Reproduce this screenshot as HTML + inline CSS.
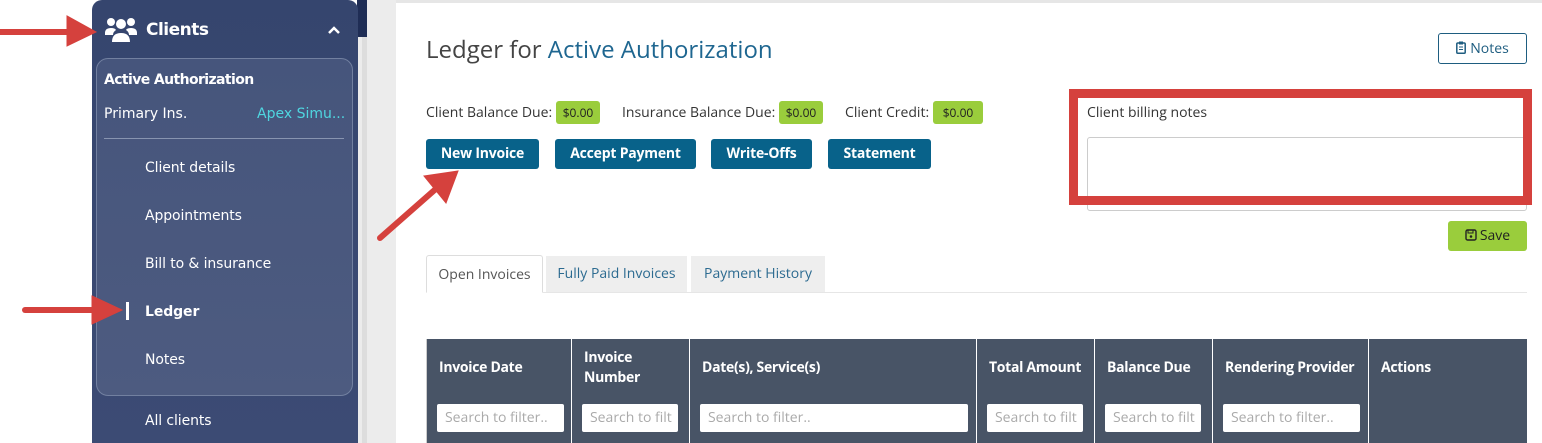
<!DOCTYPE html>
<html><head><meta charset="utf-8"><style>
*{box-sizing:border-box;margin:0;padding:0}
body{width:1542px;height:443px;overflow:hidden;background:#fff;position:relative;font-family:"Open Sans","Liberation Sans",sans-serif;}
.abs{position:absolute}
.sb{left:92px;top:0;width:266px;height:443px;background:linear-gradient(#35456e,#3c4b74);border-radius:10px 10px 0 0}
.sbt{font-family:"DejaVu Sans","Liberation Sans",sans-serif;color:#fff}
.box{left:96px;top:58px;width:257px;height:338px;border:1px solid #7280a0;border-radius:12px;background:linear-gradient(#46557c,#4d5b80)}
.nav{left:145px;font-size:14px;color:#fff;font-family:"DejaVu Sans","Liberation Sans",sans-serif;letter-spacing:-0.1px}
.btn{top:139px;height:30px;background:#08628a;color:#fff;font-weight:bold;font-size:14px;border-radius:3px;text-align:center;line-height:30px;letter-spacing:-0.2px}
.pill{top:101px;height:23px;background:#9acd3c;border-radius:3px;font-size:12px;color:#222;line-height:23px;text-align:center}
.lbl{top:103px;font-size:14px;color:#333}
.th{top:339px;height:104px;background:#485466;border-left:1px solid #fff}
.th span{position:absolute;left:12px;color:#fff;font-weight:bold;font-size:14px;line-height:20px;letter-spacing:-0.3px}
.th i{position:absolute;left:10px;top:65px;height:28px;background:#fff;font-style:normal;color:#aaa;font-size:14px;line-height:28px;padding-left:8px;overflow:hidden;white-space:nowrap;border-radius:2px}
</style></head><body>
<div class="abs" style="left:358px;top:0;width:38px;height:443px;background:#ececec"></div>
<div class="abs" style="left:357px;top:0;width:10px;height:37px;background:#1f2d55"></div>
<div class="abs" style="left:362px;top:37px;width:5px;height:406px;background:#ddd"></div>
<div class="abs" style="left:396px;top:0;width:1146px;height:443px;background:#fff;border-top:3px solid #e6e6e6"></div>

<div class="abs sb"></div>
<svg class="abs" style="left:105px;top:17px" width="32" height="26" viewBox="0 0 32 26" fill="#fff"><circle cx="6" cy="5" r="4"/><circle cx="26" cy="5" r="4"/><circle cx="16" cy="7" r="5"/><path d="M0 16q0-5 6-5q4 0 5 2q-3 2-3 5H0z"/><path d="M32 16q0-5-6-5q-4 0-5 2q3 2 3 5h8z"/><path d="M7 25q0-9 9-9q9 0 9 9z"/></svg>
<div class="abs sbt" style="left:146px;top:20px;font-size:17px;font-weight:bold;letter-spacing:-0.5px">Clients</div>
<svg class="abs" style="left:327px;top:25px" width="14" height="10"><path d="M2 8L7 3L12 8" stroke="#fff" stroke-width="2.5" fill="none"/></svg>
<div class="abs box"></div>
<div class="abs sbt" style="left:104px;top:72px;font-size:14px;font-weight:bold;letter-spacing:-0.6px">Active Authorization</div>
<div class="abs sbt" style="left:104px;top:106px;font-size:14px">Primary Ins.</div>
<div class="abs sbt" style="left:257px;top:106px;font-size:14px;color:#4fd6e0">Apex Simu...</div>
<div class="abs" style="left:104px;top:138px;width:240px;height:1px;background:#8894b0"></div>
<div class="abs nav" style="top:160px">Client details</div>
<div class="abs nav" style="top:208px">Appointments</div>
<div class="abs nav" style="top:256px">Bill to &amp; insurance</div>
<div class="abs" style="left:126px;top:302px;width:3px;height:18px;background:#fff"></div>
<div class="abs nav" style="top:304px;font-weight:bold">Ledger</div>
<div class="abs nav" style="top:352px">Notes</div>
<div class="abs nav" style="top:413px">All clients</div>

<div class="abs" style="left:426px;top:33px;font-size:24px;color:#444">Ledger for <span style="color:#1e6690">Active Authorization</span></div>
<div class="abs" style="left:1438px;top:33px;width:89px;height:31px;border:1px solid #1e5d80;border-radius:3px;color:#1e5d80;font-size:14px;line-height:29px;text-align:center">
<svg width="10" height="13" style="vertical-align:-1px;margin-right:4px" viewBox="0 0 10 13"><rect x="0.8" y="2" width="8.4" height="10.2" rx="1" fill="none" stroke="#1e5d80" stroke-width="1.5"/><rect x="3" y="0.5" width="4" height="3" fill="#1e5d80"/><path d="M3 6h4M3 8.5h4" stroke="#1e5d80"/></svg>Notes</div>

<div class="abs lbl" style="left:426px">Client Balance Due:</div>
<div class="abs pill" style="left:556px;width:44px">$0.00</div>
<div class="abs lbl" style="left:622px">Insurance Balance Due:</div>
<div class="abs pill" style="left:779px;width:44px">$0.00</div>
<div class="abs lbl" style="left:845px">Client Credit:</div>
<div class="abs pill" style="left:933px;width:50px">$0.00</div>

<div class="abs btn" style="left:426px;width:113px">New Invoice</div>
<div class="abs btn" style="left:555px;width:141px">Accept Payment</div>
<div class="abs btn" style="left:711px;width:101px">Write-Offs</div>
<div class="abs btn" style="left:828px;width:103px">Statement</div>

<div class="abs" style="left:1087px;top:103px;font-size:14px;color:#333">Client billing notes</div>
<div class="abs" style="left:1087px;top:137px;width:440px;height:74px;border:1px solid #ccc;border-radius:3px"></div>
<div class="abs" style="left:1069px;top:89px;width:463px;height:116px;border:9px solid #d5413d"></div>
<div class="abs" style="left:1448px;top:221px;width:79px;height:30px;background:#9acd3c;border-radius:3px;font-size:14px;color:#222;line-height:30px;text-align:center">
<svg width="12" height="12" viewBox="0 0 12 12" style="vertical-align:-1px;margin-right:3px"><rect x="1" y="1" width="10" height="10" rx="1.5" fill="none" stroke="#222" stroke-width="1.4"/><rect x="3" y="1" width="5" height="3" fill="none" stroke="#222"/><circle cx="6" cy="7.5" r="1.3" fill="#222"/></svg>Save</div>

<div class="abs" style="left:426px;top:292px;width:1101px;height:1px;background:#e6e6e6"></div>
<div class="abs" style="left:426px;top:255px;width:117px;height:38px;border:1px solid #ddd;border-bottom:1px solid #fff;border-radius:3px 3px 0 0;background:#fff;font-size:14px;color:#555;line-height:38px;text-align:center">Open Invoices</div>
<div class="abs" style="left:546px;top:256px;width:141px;height:36px;background:#eee;font-size:14px;color:#2b6a90;line-height:36px;text-align:center">Fully Paid Invoices</div>
<div class="abs" style="left:691px;top:256px;width:134px;height:36px;background:#eee;font-size:14px;color:#2b6a90;line-height:36px;text-align:center">Payment History</div>

<div class="abs" style="left:426px;top:339px;width:1101px;height:1px;background:#ccc"></div>
<div class="abs th" style="left:426px;width:145px;border-left:1px solid #ccc"><span style="top:19px">Invoice Date</span><i style="width:127px">Search to filter..</i></div>
<div class="abs th" style="left:571px;width:118px"><span style="top:9px">Invoice<br>Number</span><i style="width:96px">Search to filt</i></div>
<div class="abs th" style="left:689px;width:287px"><span style="top:19px">Date(s), Service(s)</span><i style="width:268px">Search to filter..</i></div>
<div class="abs th" style="left:976px;width:118px"><span style="top:19px">Total Amount</span><i style="width:96px">Search to filt</i></div>
<div class="abs th" style="left:1094px;width:118px"><span style="top:19px">Balance Due</span><i style="width:96px">Search to filt</i></div>
<div class="abs th" style="left:1212px;width:156px"><span style="top:19px">Rendering Provider</span><i style="width:137px">Search to filter..</i></div>
<div class="abs th" style="left:1368px;width:159px"><span style="top:19px">Actions</span></div>

<svg class="abs" style="left:0;top:0" width="1542" height="443">
<g fill="#d5413d" stroke="#d5413d" stroke-linecap="round">
<path d="M0 32H72" stroke-width="6"/><path d="M67 16L96 32L67 46z"/>
<path d="M25 310H100" stroke-width="6"/><path d="M92 296L122 310L92 324z"/>
<path d="M380 238L438 187" stroke-width="6"/><path d="M424 176L458 171L446 203z"/>
</g></svg>
</body></html>
